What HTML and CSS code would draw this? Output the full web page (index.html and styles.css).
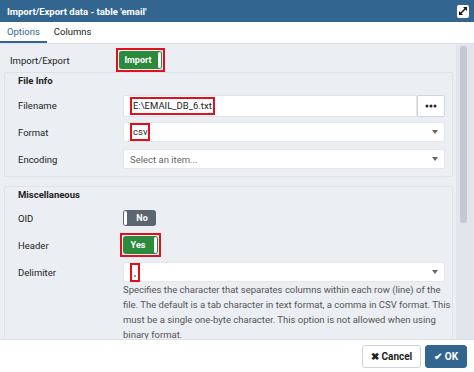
FILE: index.html
```html
<!DOCTYPE html>
<html>
<head>
  <title>Import/Export data</title>
  <link rel="stylesheet" href="styles.css">
</head>
<body>
  <div class="dialog">
    <div class="titlebar">
      <span class="title">Import/Export data - table 'email'</span>
      <span class="expand">
        <svg width="10" height="10" viewBox="0 0 10 10">
          <path d="M2.5 7.5 L7.5 2.5" stroke="#111" stroke-width="1.4"/>
          <path d="M5 1 H9 V5 Z" fill="#111"/>
          <path d="M1 5 V9 H5 Z" fill="#111"/>
        </svg>
      </span>
    </div>
    <div class="tabs">
      <span class="tab active">Options</span>
      <span class="tab">Columns</span>
    </div>
    <div class="body">
      <div class="content">
        <div class="row top-row">
          <span class="label">Import/Export</span>
          <span class="mark"><span class="toggle on wide"><span class="toggle-text">Import</span><span class="handle"></span></span></span>
        </div>

        <div class="section first">
          <div class="section-title">File Info</div>
          <div class="row">
            <span class="label">Filename</span>
            <div class="input-group">
              <div class="input"><span class="mark val">E:\EMAIL_DB_6.txt</span></div>
              <div class="dots-btn">
                <svg width="12" height="4" viewBox="0 0 12 4">
                  <circle cx="2" cy="2" r="1.5" fill="#222"/>
                  <circle cx="6" cy="2" r="1.5" fill="#222"/>
                  <circle cx="10" cy="2" r="1.5" fill="#222"/>
                </svg>
              </div>
            </div>
          </div>
          <div class="row">
            <span class="label">Format</span>
            <div class="select"><span class="mark val">csv</span><span class="caret"></span></div>
          </div>
          <div class="row">
            <span class="label">Encoding</span>
            <div class="select"><span class="placeholder">Select an item...</span><span class="caret"></span></div>
          </div>
        </div>

        <div class="section">
          <div class="section-title">Miscellaneous</div>
          <div class="row">
            <span class="label">OID</span>
            <span class="toggle off"><span class="handle"></span><span class="toggle-text">No</span></span>
          </div>
          <div class="row">
            <span class="label">Header</span>
            <span class="mark"><span class="toggle on"><span class="toggle-text">Yes</span><span class="handle"></span></span></span>
          </div>
          <div class="row">
            <span class="label">Delimiter</span>
            <div class="select"><span class="mark val comma">,</span><span class="caret"></span></div>
          </div>
          <div class="help">Specifies the character that separates columns within each row (line) of the file. The default is a tab character in text format, a comma in CSV format. This must be a single one-byte character. This option is not allowed when using binary format.</div>
        </div>
      </div>
      <div class="scrollbar"><div class="thumb"></div></div>
    </div>
    <div class="footer">
      <span class="btn cancel">&#10006; Cancel</span>
      <span class="btn ok">&#10004; OK</span>
    </div>
  </div>
</body>
</html>
```

FILE: styles.css
```css
body {
  margin: 0;
  font-family: Roboto, "Liberation Sans", sans-serif;
  font-size: 9.5px;
  color: #222;
}

.dialog {
  width: 474px;
  height: 372px;
  display: flex;
  flex-direction: column;
  overflow: hidden;
}

.titlebar {
  height: 22px;
  background-color: #326690;
  color: white;
  display: flex;
  align-items: center;
  justify-content: space-between;
  padding: 0 5px 0 7px;
}

.title {
  font-weight: bold;
  font-size: 9.5px;
}

.expand {
  width: 12px;
  height: 13px;
  background: white;
  border-radius: 2px;
  display: flex;
  align-items: center;
  justify-content: center;
}

.tabs {
  height: 21px;
  display: flex;
  background: white;
  border-bottom: 1px solid #dde0e6;
}

.tab {
  padding: 0 7px;
  line-height: 19px;
  border-bottom: 2px solid transparent;
}

.tab.active {
  color: #326690;
  border-bottom-color: #326690;
}

.body {
  flex: 1;
  display: flex;
  background-color: #ebeef3;
  overflow: hidden;
}

.content {
  flex: 1;
  padding: 4px 3px 0 4px;
}

.scrollbar {
  width: 14px;
  background: #e2e5eb;
  padding: 2px 0 0 4px;
}

.thumb {
  width: 7px;
  height: 177px;
  background: #c4c8d0;
  border-radius: 3px;
}

.row {
  display: flex;
  align-items: center;
  height: 20px;
  margin-bottom: 7px;
}

.top-row {
  padding-left: 6px;
  margin-bottom: 0;
  height: 24px;
}

.top-row .label {
  width: 107px;
}

.top-row .mark {
  margin-left: -1px;
}

.label {
  width: 105px;
  flex-shrink: 0;
}

.section {
  border: 1px solid #dfe2e8;
  border-radius: 2px;
  padding: 0 7px 0 13px;
  margin-bottom: 7px;
}

.section.first {
  margin-bottom: 9px;
}

.section-title {
  font-weight: bold;
  height: 21px;
  line-height: 15px;
}

.section.first .section-title {
  height: 22px;
}

.mark {
  border: 2px solid #e0101c;
  padding: 1px;
  display: inline-flex;
  margin-left: -3px;
}

.toggle {
  display: inline-flex;
  align-items: center;
  height: 18px;
  border-radius: 3px;
  color: white;
  font-weight: bold;
  font-size: 9px;
}

.toggle.on {
  background: #2b8a3c;
  width: 35px;
  justify-content: flex-end;
}

.toggle.wide {
  width: 43px;
}

.toggle.off {
  background: #5c6670;
  width: 33px;
  justify-content: flex-start;
  height: 16px;
}

.toggle-text {
  flex: 1;
  text-align: center;
}

.handle {
  width: 3px;
  align-self: stretch;
  margin: 1px;
  background: white;
  border-radius: 2px;
}

.input-group {
  flex: 1;
  display: flex;
  height: 22px;
  margin-top: 2px;
}

.input {
  flex: 1;
  background: white;
  border: 1px solid #dfe2e8;
  border-radius: 2px 0 0 2px;
  display: flex;
  align-items: center;
  padding-left: 6px;
}

.dots-btn {
  width: 26px;
  background: white;
  border: 1px solid #d3d6dc;
  border-radius: 0 2px 2px 0;
  display: flex;
  align-items: center;
  justify-content: center;
}

.select {
  flex: 1;
  height: 20px;
  background: white;
  border: 1px solid #e3e6eb;
  border-radius: 2px;
  display: flex;
  align-items: center;
  justify-content: space-between;
  padding: 0 6px;
  box-sizing: border-box;
}

.val {
  padding: 0 1px;
  margin-left: 0;
  line-height: 14px;
}

.comma {
  padding: 0 2px;
  line-height: 15px;
}

.placeholder {
  color: #666;
}

.caret {
  width: 0;
  height: 0;
  border-left: 3px solid transparent;
  border-right: 3px solid transparent;
  border-top: 4px solid #666;
}

.help {
  margin: -7px -8px 0 105px;
  color: #555;
  line-height: 15px;
}

.footer {
  height: 32px;
  background: white;
  border-top: 1px solid #dde0e6;
  display: flex;
  align-items: center;
  justify-content: flex-end;
  gap: 4px;
  padding-right: 7px;
}

.btn {
  height: 21px;
  display: inline-flex;
  align-items: center;
  padding: 0 8px;
  border-radius: 3px;
  font-weight: bold;
  font-size: 10px;
}

.cancel {
  border: 1px solid #cfd3d9;
  background: white;
  color: #222;
}

.ok {
  background: #326690;
  color: white;
  border: 1px solid #326690;
}
```
